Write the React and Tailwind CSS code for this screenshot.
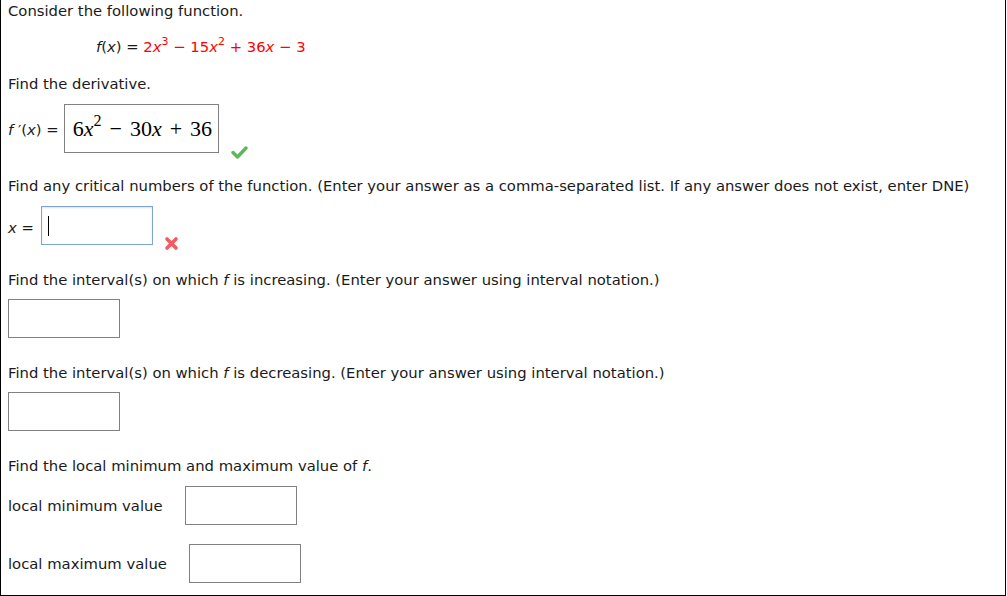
import React from 'react';

const Check = () => (
  <svg width="17" height="14" viewBox="0 0 17 14" className="block">
    <path d="M2 7.5 L6.5 12 L15 3" fill="none" stroke="#5cb85c" strokeWidth="3.4" strokeLinecap="round" strokeLinejoin="round" />
  </svg>
);

const Cross = () => (
  <svg width="15" height="15" viewBox="0 0 15 15" className="block">
    <path d="M3 3 L12 12 M12 3 L3 12" fill="none" stroke="#f25c62" strokeWidth="3.6" strokeLinecap="round" />
  </svg>
);

const Box = ({ className = '' }) => (
  <div className={`h-[39px] w-[112px] border border-[#808080] bg-white ${className}`} />
);

export default function App() {
  return (
    <div
      className="relative h-[596px] w-[1006px] border-b border-l border-r border-black bg-white text-[14.8px] text-[#1a1a1a]"
      style={{ fontFamily: '"DejaVu Sans", Verdana, sans-serif' }}
    >
      <div className="pl-[7px] pt-[2px]">
        <p className="leading-[18px]">Consider the following function.</p>

        <p className="mt-[18px] pl-[88px] leading-[18px]">
          <i>f</i>(<i>x</i>) ={' '}
          <span className="text-[#ff0000]">
            2<i>x</i>
            <sup className="-top-[7px] text-[11px]">3</sup> − 15<i>x</i>
            <sup className="-top-[7px] text-[11px]">2</sup> + 36<i>x</i> − 3
          </span>
        </p>

        <p className="mt-[19px] leading-[18px]">Find the derivative.</p>

        <div className="mt-[11px] flex items-start">
          <span className="mt-[17px] leading-[18px]">
            <i>f</i> ′(<i>x</i>) =
          </span>
          <div
            className="ml-[5px] flex h-[49px] w-[155px] items-center border border-[#808080] pl-[8px] text-[22px] text-black"
            style={{ fontFamily: '"Liberation Serif", "DejaVu Serif", serif' }}
          >
            6<i className="italic">x</i>
            <sup className="-top-[8px] text-[16px]">2</sup>
            <span className="mx-[8px]">−</span>30<i className="italic">x</i>
            <span className="mx-[8px]">+</span>36
          </div>
          <div className="ml-[12px] mt-[41px]">
            <Check />
          </div>
        </div>

        <p className="mt-[18px] leading-[18px]">
          Find any critical numbers of the function. (Enter your answer as a comma-separated list. If any answer does not exist, enter DNE)
        </p>

        <div className="mt-[11px] flex items-start">
          <span className="mt-[13px] leading-[18px]">
            <i>x</i> =
          </span>
          <div className="ml-[7px] flex h-[39px] w-[112px] items-center border border-[#7ea4d4] bg-white pl-[6px] shadow-[inset_0_1px_2px_rgba(0,0,0,0.12)]">
            <div className="h-[20px] w-[1px] bg-black" />
          </div>
          <div className="ml-[11px] mt-[30px]">
            <Cross />
          </div>
        </div>

        <p className="mt-[20px] leading-[18px]">
          Find the interval(s) on which <i>f</i> is increasing. (Enter your answer using interval notation.)
        </p>
        <Box className="mt-[10px]" />

        <p className="mt-[26px] leading-[18px]">
          Find the interval(s) on which <i>f</i> is decreasing. (Enter your answer using interval notation.)
        </p>
        <Box className="mt-[10px]" />

        <p className="mt-[26px] leading-[18px]">
          Find the local minimum and maximum value of <i>f</i>.
        </p>

        <div className="mt-[11px] flex items-center">
          <span className="w-[177px] leading-[18px]">local minimum value</span>
          <Box />
        </div>
        <div className="mt-[19px] flex items-center">
          <span className="w-[181px] leading-[18px]">local maximum value</span>
          <Box />
        </div>
      </div>
    </div>
  );
}
